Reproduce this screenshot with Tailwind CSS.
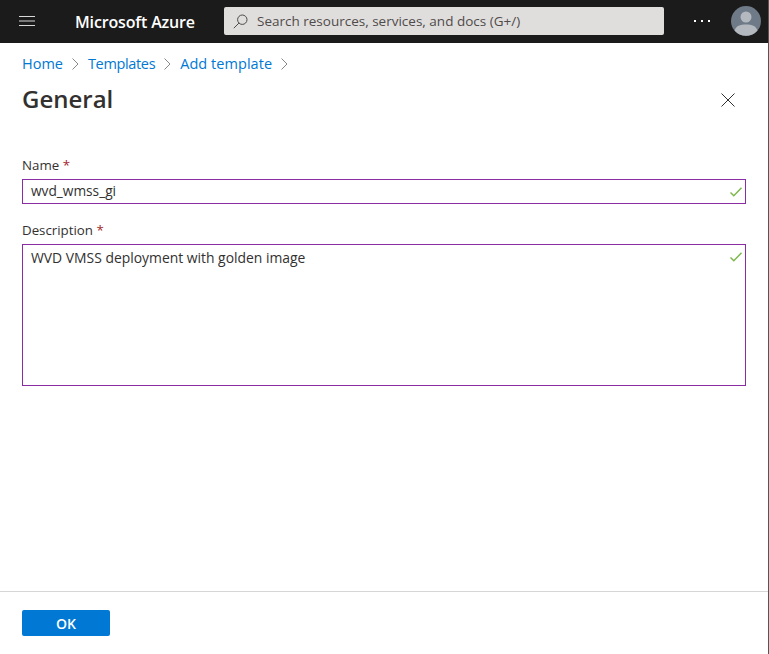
<!DOCTYPE html>
<html lang="en">
<head>
  <meta charset="UTF-8" />
  <title>Microsoft Azure | General</title>
  <script src="https://cdn.jsdelivr.net/npm/@tailwindcss/browser@4"></script>
</head>
<body class="bg-white font-['Open_Sans',sans-serif] text-[#323130] overflow-hidden">
  <div class="w-[768px] h-[654px] flex flex-col border-r border-[#555555] box-content">
    <!-- top bar -->
    <header class="h-[43px] pb-[1px] bg-[#1b1b1b] flex items-center shrink-0">
      <button class="w-[54px] pl-[19px] flex items-center">
        <svg class="w-[16px] h-[12px]" viewBox="0 0 16 12" stroke="#d8d8d8" stroke-width="1"><path d="M0 1.5h16M0 6h16M0 10.5h16" /></svg>
      </button>
      <span class="w-[170px] pl-[21px] pt-[1px] text-[16px] font-semibold text-white tracking-[-0.15px] whitespace-nowrap">Microsoft Azure</span>
      <div class="w-[440px] h-[28px] bg-[#e0dedd] rounded-[2px] flex items-center pl-[9px]">
        <svg class="w-[15px] h-[15px] shrink-0" viewBox="0 0 15 15" fill="none" stroke="#4a4a4a" stroke-width="1"><circle cx="9.3" cy="5.7" r="4.7" /><path d="M5.9 9.1L0.8 14.2" /></svg>
        <span class="ml-[9px] text-[13.5px] text-[#4f4b4a] whitespace-nowrap">Search resources, services, and docs (G+/)</span>
      </div>
      <div class="ml-[30px] flex gap-[5px]">
        <span class="w-[2px] h-[2px] bg-white"></span>
        <span class="w-[2px] h-[2px] bg-white"></span>
        <span class="w-[2px] h-[2px] bg-white"></span>
      </div>
      <svg class="ml-[21px] w-[30px] h-[30px]" viewBox="0 0 30 30">
        <circle cx="15" cy="15" r="15" fill="#6e7a87" />
        <circle cx="15" cy="11" r="5.5" fill="#b3b9bf" />
        <path d="M3.5 24.5C5 20 9 18.5 15 18.5S25 20 26.5 24.5A15 15 0 0 1 3.5 24.5Z" fill="#b3b9bf" />
      </svg>
    </header>

    <main class="flex-1 flex flex-col min-h-0">
      <nav class="h-[41px] pl-[22px] flex items-center text-[14.5px] text-[#0078d4] whitespace-nowrap">
        <a href="#">Home</a>
        <svg class="w-[7px] h-[12px] mx-[9px]" viewBox="0 0 7 12" fill="none" stroke="#8a8886"><path d="M0.5 0.5L6 6L0.5 11.5" /></svg>
        <a href="#" class="tracking-[-0.35px]">Templates</a>
        <svg class="w-[7px] h-[12px] mx-[9px]" viewBox="0 0 7 12" fill="none" stroke="#8a8886"><path d="M0.5 0.5L6 6L0.5 11.5" /></svg>
        <a href="#" class="tracking-[0.05px]">Add template</a>
        <svg class="w-[7px] h-[12px] mx-[9px]" viewBox="0 0 7 12" fill="none" stroke="#8a8886"><path d="M0.5 0.5L6 6L0.5 11.5" /></svg>
      </nav>

      <div class="pl-[22px] pr-[33px] h-[32px] flex items-center justify-between">
        <h1 class="text-[24px] font-semibold leading-[32px] pb-[2px]">General</h1>
        <svg class="w-[14px] h-[14px]" viewBox="0 0 14 14" stroke="#323130" stroke-width="1"><path d="M0.5 0.5L13.5 13.5M13.5 0.5L0.5 13.5" /></svg>
      </div>

      <form class="flex-1 pl-[22px] pr-[22px] pt-[40px]">
        <label class="block h-[23px] text-[13.3px] leading-[18px]">Name <span class="text-[#a4262c]">*</span></label>
        <div class="h-[25px] border border-[#8a2da5] flex items-center justify-between pl-[8px] pr-[3px] text-[13.7px]">
          <span>wvd_wmss_gi</span>
          <svg class="w-[12px] h-[10px]" viewBox="0 0 12 10" fill="none" stroke="#7ab648" stroke-width="1.4"><path d="M0.5 5.5L3.8 8.8L11.5 0.8" /></svg>
        </div>
        <label class="block mt-[17px] h-[23px] text-[13.3px] leading-[18px]">Description <span class="text-[#a4262c]">*</span></label>
        <div class="h-[142px] border border-[#8a2da5] flex items-start justify-between pl-[8px] pr-[3px] pt-[3px] text-[13.9px]">
          <span>WVD VMSS deployment with golden image</span>
          <svg class="w-[12px] h-[10px] mt-[4px]" viewBox="0 0 12 10" fill="none" stroke="#7ab648" stroke-width="1.4"><path d="M0.5 5.5L3.8 8.8L11.5 0.8" /></svg>
        </div>
      </form>

      <footer class="h-[63px] shrink-0 border-t border-[#d6d6d6] pl-[22px] pt-[18px]">
        <button class="w-[88px] h-[26px] bg-[#0078d4] rounded-[2px] text-white text-[14px] font-semibold block">OK</button>
      </footer>
    </main>
  </div>
</body>
</html>
